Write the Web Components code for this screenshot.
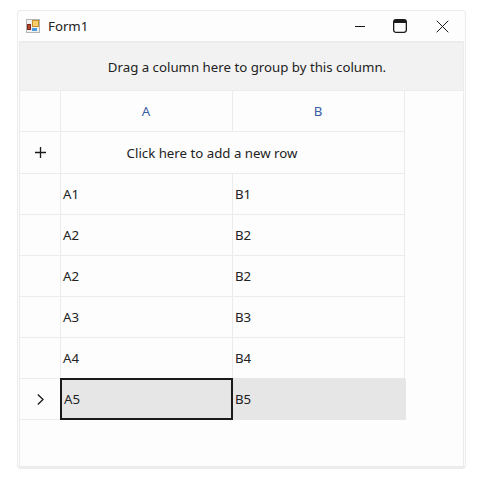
<!DOCTYPE html>
<html>
<head>
<meta charset="utf-8">
<title>Form1</title>
<style>
  html, body { margin: 0; background: #fff; }
  body { padding: 10px 0 0 17px; font: 13.25px "Noto Sans", "Open Sans", sans-serif; color: #222; }
</style>
</head>
<body>
<form-window caption="Form1">
  <group-panel>Drag a column here to group by this column.</group-panel>
  <data-grid>
    <grid-row kind="header"><grid-cell></grid-cell><grid-cell head>A</grid-cell><grid-cell head>B</grid-cell></grid-row>
    <grid-row kind="new"><grid-cell><row-mark type="plus"></row-mark></grid-cell><grid-cell span>Click here to add a new row</grid-cell></grid-row>
    <grid-row><grid-cell></grid-cell><grid-cell>A1</grid-cell><grid-cell>B1</grid-cell></grid-row>
    <grid-row><grid-cell></grid-cell><grid-cell>A2</grid-cell><grid-cell>B2</grid-cell></grid-row>
    <grid-row><grid-cell></grid-cell><grid-cell>A2</grid-cell><grid-cell>B2</grid-cell></grid-row>
    <grid-row><grid-cell></grid-cell><grid-cell>A3</grid-cell><grid-cell>B3</grid-cell></grid-row>
    <grid-row><grid-cell></grid-cell><grid-cell>A4</grid-cell><grid-cell>B4</grid-cell></grid-row>
    <grid-row><grid-cell><row-mark type="arrow"></row-mark></grid-cell><grid-cell current>A5</grid-cell><grid-cell selected>B5</grid-cell></grid-row>
  </data-grid>
</form-window>
<script>
class FormWindow extends HTMLElement {
  constructor() {
    super();
    this.root = this.attachShadow({mode: 'open'});
    this.root.innerHTML = `
      <style>
        :host {
          background: #fdfdfd;
          border: 1px solid #ececec;
          border-bottom-width: 2px;
          border-radius: 4px;
          box-sizing: border-box;
          display: flex;
          flex-direction: column;
          height: 459px;
          padding-left: 1px;
          width: 449px;
        }
        .bar {
          align-items: center;
          display: flex;
          flex: none;
          height: 30px;
          padding-left: 7px;
        }
        .bar svg { display: block; flex: none; }
        .title { margin-left: 8px; flex: 1; }
        .btn { display: flex; align-items: center; justify-content: center; flex: none; }
        .min { width: 42px; }
        .max { width: 38px; }
        .close { width: 46px; }
        .body {
          border: 1px solid #ececec;
          border-width: 2px 1px 1px 1px;
          display: flex;
          flex: 1;
          flex-direction: column;
          margin-right: 1px;
          min-height: 0;
        }
      </style>
      <div class="bar">
        <svg width="14" height="14" viewBox="0 0 14 14">
          <rect x=".5" y=".5" width="13" height="13" fill="#f1f1f1" stroke="#b4b4b4"/>
          <rect x="6.5" y="1.5" width="6" height="6" fill="#f8cf6a" stroke="#c6902f"/>
          <rect x="1.5" y="5.5" width="3" height="5" fill="#b5432f" stroke="#7c2a1c"/>
          <rect x="6" y="9" width="5" height="3" fill="#4b9be0"/>
        </svg>
        <span class="title"></span>
        <span class="btn min">
          <svg width="12" height="12" viewBox="0 0 12 12"><path d="M1 6.5h10" stroke="#1a1a1a" stroke-width="1" fill="none"/></svg>
        </span>
        <span class="btn max">
          <svg width="14" height="14" viewBox="0 0 14 14"><rect x=".65" y=".65" width="12.7" height="12.7" rx="2.5" fill="none" stroke="#1a1a1a" stroke-width="1.3"/><path d="M1 .8h12v3.2H1z" fill="#1a1a1a"/></svg>
        </span>
        <span class="btn close">
          <svg width="13" height="13" viewBox="0 0 13 13"><path d="M.7.7l11.6 11.6M12.3.7L.7 12.3" stroke="#1a1a1a" stroke-width="1" fill="none"/></svg>
        </span>
      </div>
      <div class="body"><slot></slot></div>
    `;
    this.root.querySelector('.title').textContent = this.getAttribute('caption');
  }
}
customElements.define('form-window', FormWindow);

class GroupPanel extends HTMLElement {
  constructor() {
    super();
    this.root = this.attachShadow({mode: 'open'});
    this.root.innerHTML = `
      <style>
        :host {
          align-items: center;
          background: #f2f2f2;
          border-bottom: 1px solid #ececec;
          box-sizing: border-box;
          display: flex;
          flex: none;
          height: 48px;
          justify-content: center;
          padding-left: 11px;
        }
      </style>
      <slot></slot>
    `;
  }
}
customElements.define('group-panel', GroupPanel);

class DataGrid extends HTMLElement {
  constructor() {
    super();
    this.root = this.attachShadow({mode: 'open'});
    this.root.innerHTML = `
      <style>
        :host { display: block; flex: 1; }
      </style>
      <slot></slot>
    `;
  }
}
customElements.define('data-grid', DataGrid);

class GridRow extends HTMLElement {
  constructor() {
    super();
    this.root = this.attachShadow({mode: 'open'});
    this.root.innerHTML = `
      <style>
        :host {
          display: grid;
          grid-template-columns: 41px 172px 172px;
          height: 41px;
        }
        :host([kind="new"]) { height: 42px; }
      </style>
      <slot></slot>
    `;
  }
}
customElements.define('grid-row', GridRow);

class GridCell extends HTMLElement {
  constructor() {
    super();
    this.root = this.attachShadow({mode: 'open'});
    this.root.innerHTML = `
      <style>
        :host {
          align-items: center;
          border-bottom: 1px solid #ececec;
          border-right: 1px solid #ececec;
          box-sizing: border-box;
          display: flex;
          padding-left: 2px;
        }
        :host([head]) { color: #3a5ea0; justify-content: center; padding: 0 1px 0 0; }
        :host([span]) { grid-column: span 2; justify-content: center; padding: 0 41px 0 0; }
        :host([selected]) {
          background: #e6e6e6;
          border-color: #e6e6e6;
          box-shadow: 1px 0 0 #e6e6e6, 0 -1px 0 #e6e6e6;
        }
        :host([current]) {
          background: #e6e6e6;
          border: 2px solid #1a1a1a;
          margin: -1px 0 0 -1px;
          position: relative;
          z-index: 1;
        }
      </style>
      <slot></slot>
    `;
  }
}
customElements.define('grid-cell', GridCell);

class RowMark extends HTMLElement {
  constructor() {
    super();
    this.root = this.attachShadow({mode: 'open'});
    const path = this.getAttribute('type') === 'plus'
      ? 'M1 6.5h11M6.5 1v11'
      : 'M3.8 1.5l5.2 5-5.2 5';
    this.root.innerHTML = `
      <style>
        :host { display: flex; flex: 1; justify-content: center; margin-left: -2px; }
        svg { display: block; }
      </style>
      <svg width="13" height="13" viewBox="0 0 13 13"><path d="${path}" stroke="#1a1a1a" stroke-width="1.3" fill="none"/></svg>
    `;
  }
}
customElements.define('row-mark', RowMark);
</script>
</body>
</html>
